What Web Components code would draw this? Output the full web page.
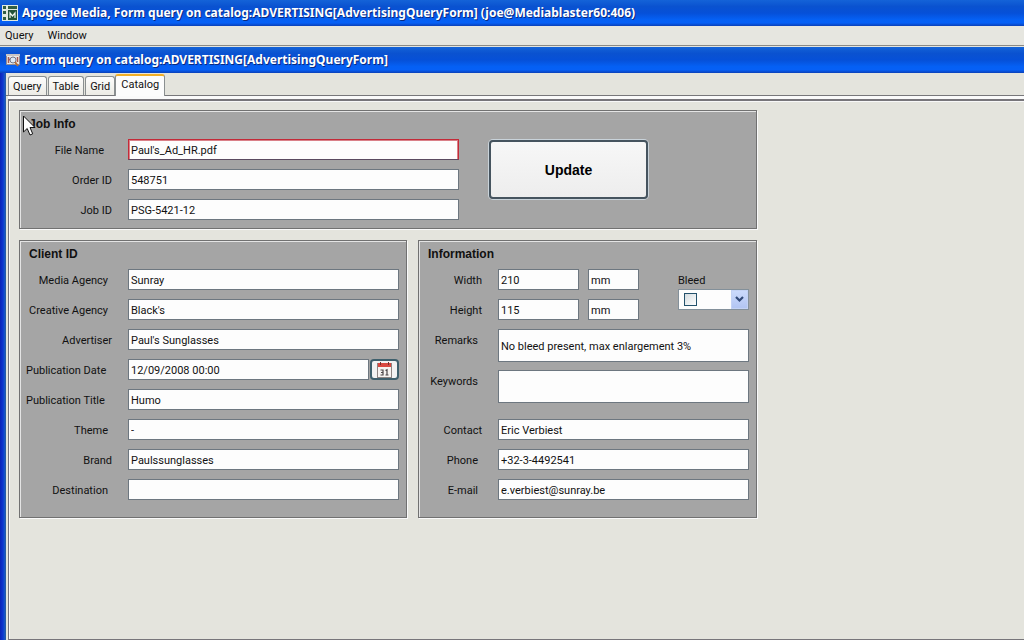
<!DOCTYPE html>
<html lang="en">
<head>
<meta charset="utf-8">
<title>Apogee Media</title>
<style>
  body { margin: 0; background: #e4e4dd; color: #111; font: 11px/14px Roboto, Tahoma, sans-serif; }
</style>
</head>
<body>
<media-app></media-app>
<script>
const define = (name, html, setup) => {
  const template = document.createElement('template');
  template.innerHTML = html;
  customElements.define(name, class extends HTMLElement {
    connectedCallback() {
      if (this.shadowRoot) return;
      const root = this.attachShadow({ mode: 'open' });
      root.append(template.content.cloneNode(true));
      if (setup) setup(this, root);
    }
  });
};

define('title-bar', `
<style>
  :host { display: flex; align-items: center; gap: 4px; height: 26px; padding-left: 2px; box-sizing: border-box;
    background: linear-gradient(#1463d8 0, #0a52d0 25%, #0650d8 50%, #0560f4 75%, #0660f6 88%, #0a40b8 100%);
    color: #fff; }
  h1 { margin: 0; font: bold 12px/18px "Noto Sans", sans-serif; white-space: nowrap; text-shadow: 1px 1px 0 #0a2a80; }
</style>
<slot name="icon"></slot><h1><slot></slot></h1>`);

define('menu-bar', `
<style>
  :host { display: flex; height: 19px; padding-left: 5px; gap: 14px; border-bottom: 1px solid #8a8a86; background: #e6e6e0; }
  button { border: 0; padding: 0; background: none; color: inherit; font: inherit; line-height: 18px; }
</style>
<button>Query</button><button>Window</button>`);

define('tab-strip', `
<style>
  :host { display: flex; align-items: flex-end; height: 22px; padding-left: 2px; gap: 1px; border-bottom: 1px solid #77777a; }
  button { box-sizing: border-box; height: 19px; padding: 2px 4px 0; border: 1px solid #8a8f90; border-bottom: 0; border-radius: 3px 3px 0 0;
    background: linear-gradient(#fdfdfc, #ecebe5); color: inherit; font: inherit; line-height: 16px; }
  button[aria-selected=true] { height: 22px; margin: 0 0 -1px -1px; padding: 0 5px 2px; background: #fcfcfc; border-top: 2px solid #f0ae28; }
</style>
<button role="tab" aria-selected="false">Query</button><button role="tab" aria-selected="false">Table</button><button role="tab" aria-selected="false">Grid</button><button role="tab" aria-selected="true">Catalog</button>`);

define('group-panel', `
<style>
  :host { display: block; box-sizing: border-box; border: 1px solid #717171; background: #a5a5a5; padding: 5px 7px 8px 6px;
    box-shadow: 1px 1px 0 #fafafa, inset 1px 1px 0 #e4e4e4; }
  h2 { margin: 0 0 7px; padding-left: 3px; font: bold 12px/16px "Liberation Sans", Arial, sans-serif; }
</style>
<h2><slot name="title"></slot></h2><slot></slot>`);

define('form-field', `
<style>
  :host { display: flex; min-height: 21px; }
  label { flex: 0 0 var(--label-width, 102px); min-width: 0; box-sizing: border-box; padding-right: 16px; text-align: right; line-height: 23px; height: 21px; white-space: nowrap; }
  :host([indent=mid]) label { padding-right: 20px; }
  :host([indent=far]) label { padding-right: 24px; }
  input, textarea { flex: 1; min-width: 0; box-sizing: border-box; height: 21px; margin: 0; padding: 1px 2px 0; border: 1px solid #6d7780;
    border-radius: 0; background: #fdfdfd; color: inherit; font: inherit; outline: 0; resize: none; }
  textarea { height: 33px; padding-top: 10px; overflow: hidden; display: block; }
  :host([invalid]) input { border-color: #c42a38 #c42a38 #5a4a60; box-shadow: inset 0 1px 0 #d98088, inset 1px 0 0 #d98088, inset -1px 0 0 #d98088; }
</style>
<label for="control"></label><slot></slot>`, (el, root) => {
  const control = document.createElement(el.hasAttribute('multiline') ? 'textarea' : 'input');
  control.id = 'control';
  control.value = el.getAttribute('value') || '';
  const label = root.querySelector('label');
  label.textContent = el.getAttribute('label');
  label.after(control);
});

define('unit-field', `
<style>
  input { width: 51px; height: 21px; box-sizing: border-box; margin: 0 0 0 9px; padding: 1px 2px 0; border: 1px solid #6d7780; background: #fdfdfd; color: inherit; font: inherit; display: block; }
</style>
<input aria-label="Unit" value="mm">`);

define('date-button', `
<style>
  :host { display: block; margin-left: 1px; }
  button { display: flex; justify-content: center; align-items: center; width: 29px; height: 21px; padding: 0; border: 2px solid #3e5f6c; border-radius: 4px; background: #f2f2f2; }
</style>
<button aria-label="Choose date"><svg width="15" height="16" viewBox="0 0 15 16">
  <rect x=".5" y="1.5" width="14" height="14" fill="#f6f3f1" stroke="#8d8583"/>
  <rect x="1" y="1" width="13" height="4" fill="#d94840"/>
  <path d="M3.5 0v3M11.5 0v3" stroke="#71302d"/>
  <path d="M3.5 8H6v5H3.5M4 10.5h2M8.5 8.500l1.500-.8V13M8.500 13h3" fill="none" stroke="#4b4648" stroke-width="1.200"/>
</svg></button>`);

define('bleed-picker', `
<style>
  :host { display: flex; flex-direction: column; width: 71px; }
  label { line-height: 23px; height: 20px; }
  div { display: flex; align-items: center; box-sizing: border-box; height: 21px; padding-left: 5px; border: 1px solid #83909a; background: #fdfdfd; }
  input { appearance: none; flex: none; width: 13px; height: 13px; margin: 0; border: 1px solid #24526c; background: linear-gradient(135deg, #d4dce0, #fff); }
  select { appearance: none; margin: 0 0 0 auto; width: 17px; height: 19px; padding: 0; border: 1px solid #c3d2f4; border-radius: 0; color: transparent;
    background: url("data:image/svg+xml,%3Csvg xmlns='http://www.w3.org/2000/svg' width='9' height='7'%3E%3Cpath d='M1 1l3.500 3.500L8 1' fill='none' stroke='%23324a78' stroke-width='2.200'/%3E%3C/svg%3E") center / 9px 7px no-repeat, linear-gradient(#cbdafc, #b2c5f2); }
</style>
<label for="tick">Bleed</label>
<div><input type="checkbox" id="tick"><select aria-label="Bleed value"><option></option></select></div>`);

define('job-panel', `
<style>
  :host { display: block; }
  .row { display: flex; gap: 30px; }
  .fields { flex: 0 1 433px; display: grid; gap: 9px; }
  button { align-self: flex-start; flex: 0 1 159px; height: 59px; margin-top: 1px; border: 2px solid #46545f; border-radius: 4px;
    background: linear-gradient(#f7f7f7, #ededed); box-shadow: 0 0 0 1px #c9d3da; font: bold 14px/18px "Liberation Sans", Arial, sans-serif; color: #000; }
</style>
<group-panel><span slot="title">Job Info</span>
  <div class="row">
    <div class="fields">
      <form-field label="File Name" value="Paul's_Ad_HR.pdf" indent="far" invalid></form-field>
      <form-field label="Order ID" value="548751"></form-field>
      <form-field label="Job ID" value="PSG-5421-12"></form-field>
    </div>
    <button>Update</button>
  </div>
</group-panel>`);

define('client-panel', `
<style>
  :host { display: grid; }
  .fields { display: grid; gap: 9px; padding-bottom: 9px; }
</style>
<group-panel><span slot="title">Client ID</span>
  <div class="fields">
    <form-field label="Media Agency" value="Sunray" indent="mid"></form-field>
    <form-field label="Creative Agency" value="Black's" indent="mid"></form-field>
    <form-field label="Advertiser" value="Paul's Sunglasses"></form-field>
    <form-field label="Publication Date" value="12/09/2008 00:00" indent="far"><date-button></date-button></form-field>
    <form-field label="Publication Title" value="Humo" indent="far"></form-field>
    <form-field label="Theme" value="-" indent="mid"></form-field>
    <form-field label="Brand" value="Paulssunglasses"></form-field>
    <form-field label="Destination" indent="mid"></form-field>
  </div>
</group-panel>`);

define('information-panel', `
<style>
  :host { display: grid; --label-width: 73px; }
  .size { display: flex; justify-content: space-between; }
  .fields { display: grid; grid-template-columns: minmax(0, 1fr); gap: 9px; }
  .size .fields { flex: 0 1 214px; }
  .notes { display: grid; gap: 8px; margin: 9px 0 16px; }
</style>
<group-panel><span slot="title">Information</span>
  <div class="size">
    <div class="fields">
      <form-field label="Width" value="210"><unit-field></unit-field></form-field>
      <form-field label="Height" value="115"><unit-field></unit-field></form-field>
    </div>
    <bleed-picker></bleed-picker>
  </div>
  <div class="notes">
    <form-field label="Remarks" value="No bleed present, max enlargement 3%" indent="mid" multiline></form-field>
    <form-field label="Keywords" indent="mid" multiline></form-field>
  </div>
  <div class="fields">
    <form-field label="Contact" value="Eric Verbiest"></form-field>
    <form-field label="Phone" value="+32-3-4492541" indent="mid"></form-field>
    <form-field label="E-mail" value="e.verbiest@sunray.be" indent="mid"></form-field>
  </div>
</group-panel>`);

define('media-app', `
<style>
  :host { display: flex; flex-direction: column; min-height: 100vh; position: relative; }
  .inner { flex: 1; display: flex; flex-direction: column; margin-top: 1px; background: linear-gradient(90deg, #0a22b8 0, #0f38d0 3px, #1c5cc4 5px, #2a5a90 6px); }
  .body { flex: 1; display: flex; flex-direction: column; margin-left: 6px; background: #e4e4dd; }
  .page { flex: 1; margin: 3px 0 0 2px; box-sizing: border-box; border: solid #77757a; border-width: 2px 0 1px 1px;
    box-shadow: 0 -3px 0 #fafafa, inset 1px 1px 0 #f8f8f8; padding: 9px 10px; }
  .sheet { display: grid; grid-template-columns: 388fr 339fr; gap: 11px; max-width: 738px; }
  job-panel { grid-column: 1 / -1; }
  .pointer { position: absolute; left: 22px; top: 115px; }
  svg { display: block; flex: none; }
</style>
<title-bar><svg slot="icon" width="16" height="16" viewBox="0 0 16 16">
  <rect width="16" height="16" fill="#e1eadf"/><path d="M1 1h3v3H1zM1 6h3v3H1zM1 12h3v3H1z" fill="#315e42"/>
  <rect x="6" y="1" width="9" height="3" fill="#315e42"/><rect x="6" y="5" width="9" height="10" fill="#245337"/>
  <path d="M8 13V8l2.500 3L13 8v5" fill="none" stroke="#eef4ee" stroke-width="1.200"/></svg>Apogee Media, Form query on catalog:ADVERTISING[AdvertisingQueryForm] (joe@Mediablaster60:406)</title-bar>
<menu-bar></menu-bar>
<div class="inner">
  <title-bar><svg slot="icon" width="18" height="14" viewBox="0 0 18 14">
    <path d="M4.500 1.500h13v10h-13z" fill="#eceae8" stroke="#938d92"/><path d="M4 2h14" stroke="#c9c5c4" stroke-width="2"/>
    <path d="M6.500 4v6M6 6.500h2M15.500 4v5" stroke="#a85a50" stroke-width="1.500"/><circle cx="11" cy="7" r="3" fill="#dce8f5" stroke="#73798a"/><path d="M13 9l3 4" stroke="#b6703a" stroke-width="2"/></svg>Form query on catalog:ADVERTISING[AdvertisingQueryForm]</title-bar>
  <div class="body">
    <tab-strip role="tablist"></tab-strip>
    <div class="page">
      <div class="sheet">
        <job-panel></job-panel>
        <client-panel></client-panel>
        <information-panel></information-panel>
      </div>
    </div>
  </div>
</div>
<svg class="pointer" width="14" height="22" viewBox="0 0 14 22"><path d="M1.500 1v16l3.700-3.500 2.800 6.500 2.700-1.200L8 12.500h5z" fill="#fff" stroke="#111"/></svg>`);
</script>
</body>
</html>
